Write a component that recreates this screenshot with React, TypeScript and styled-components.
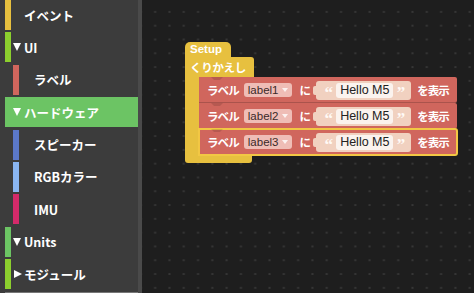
import styled, { createGlobalStyle } from "styled-components";

const GlobalStyle = createGlobalStyle`
  html, body {
    margin: 0;
    padding: 0;
    background: #1e1e1e;
    overflow: hidden;
  }
  body {
    font-family: "Noto Sans CJK JP", "Noto Sans", sans-serif;
  }
`;

const Page = styled.div`
  display: flex;
  width: 474px;
  height: 293px;
  overflow: hidden;
`;

const Sidebar = styled.nav`
  width: 138px;
  flex: none;
  background: #3c3c3c;
  border-right: 4px solid #4a4a4a;
  display: flex;
  flex-direction: column;
  gap: 2.4px;
  overflow: hidden;
`;

const Row = styled.div<{ $selected?: boolean; $bg?: string }>`
  display: flex;
  align-items: center;
  height: 30px;
  flex: none;
  margin-left: 5px;
  background: ${(p) => (p.$selected ? "#6cc464" : p.$bg || "transparent")};
  color: #fff;
  font-size: 12.5px;
  font-weight: 700;
  white-space: nowrap;
`;

const Bar = styled.span<{ $color: string; $level: number }>`
  width: 6px;
  height: 100%;
  flex: none;
  margin-left: ${(p) => (p.$level ? 8 : 0)}px;
  background: ${(p) => p.$color};
`;

const Spacer = styled.span<{ $level: number }>`
  display: flex;
  align-items: center;
  width: ${(p) => (p.$level ? 15 : 13)}px;
  padding-left: 2px;
  box-sizing: border-box;
  flex: none;
`;

const Down = styled.span`
  width: 0;
  height: 0;
  border-left: 4.5px solid transparent;
  border-right: 4.5px solid transparent;
  border-top: 8px solid #fff;
`;

const Right = styled.span`
  width: 0;
  height: 0;
  margin-left: 1px;
  border-top: 4.5px solid transparent;
  border-bottom: 4.5px solid transparent;
  border-left: 8px solid #fff;
`;

const Canvas = styled.main`
  flex: 1;
  position: relative;
  background-color: #1e1e1e;
  background-image: radial-gradient(circle, #363636 0.9px, transparent 1.3px);
  background-size: 14.3px 13.8px;
  background-position: 6px 5px;
`;

const Group = styled.div`
  position: absolute;
  left: 43px;
  top: 42px;
  display: flex;
  flex-direction: column;
  align-items: flex-start;
  color: #fff;
  font-size: 11.5px;
  font-weight: 700;
`;

const Hat = styled.div`
  width: 46px;
  height: 15px;
  line-height: 15px;
  box-sizing: border-box;
  padding-left: 5px;
  background: #e7c03f;
  border-radius: 5px 5px 0 0;
  font-family: "Liberation Sans", "Noto Sans CJK JP", sans-serif;
  font-size: 11.5px;
`;

const LoopHead = styled.div`
  width: 69px;
  height: 20px;
  line-height: 20px;
  box-sizing: border-box;
  padding-left: 5px;
  background: #e7c03f;
  border-radius: 0 3px 0 0;
  letter-spacing: -0.3px;
`;

const LoopBody = styled.div`
  display: flex;
`;

const LoopArm = styled.div`
  width: 14px;
  background: #e7c03f;
`;

const Statements = styled.div`
  display: flex;
  flex-direction: column;
`;

const LoopFoot = styled.div`
  width: 67px;
  height: 8px;
  background: #e7c03f;
  border-radius: 0 0 3px 3px;
`;

const Statement = styled.div<{ $selected?: boolean }>`
  position: relative;
  display: flex;
  align-items: center;
  width: 258px;
  height: 26px;
  box-sizing: border-box;
  padding: 0 8px 0 8px;
  background: #d0665d;
  box-shadow: inset 0 -1px 0 rgba(0, 0, 0, 0.18);
  outline: ${(p) => (p.$selected ? "2px solid #f2c744" : "none")};
  outline-offset: -1px;
  border-radius: 0 2px 2px 0;
  white-space: nowrap;
  &::before {
    content: "";
    position: absolute;
    left: 12px;
    top: 0;
    width: 12px;
    height: 3px;
    background: rgba(0, 0, 0, 0.12);
    clip-path: polygon(0 0, 100% 0, 75% 100%, 25% 100%);
  }
`;

const Word = styled.span<{ $gap?: number }>`
  flex: none;
  margin-right: ${(p) => p.$gap ?? 5}px;
  letter-spacing: -0.9px;
`;

const Dropdown = styled.span`
  flex: none;
  display: flex;
  align-items: center;
  gap: 3px;
  height: 14px;
  padding: 0 4px;
  margin-right: 8px;
  border-radius: 3px;
  background: #efbdb6;
  color: #3a2a28;
  font-family: "Liberation Sans", sans-serif;
  font-weight: 400;
  font-size: 11.5px;
  &::after {
    content: "";
    width: 0;
    height: 0;
    border-left: 3px solid transparent;
    border-right: 3px solid transparent;
    border-top: 4px solid #fff;
    opacity: 0.8;
  }
`;

const StringBlock = styled.span`
  position: relative;
  flex: none;
  display: flex;
  align-items: center;
  width: 95px;
  height: 19px;
  box-sizing: border-box;
  padding-left: 7px;
  margin: 0 6px 0 6px;
  border-radius: 3px;
  background: #f1d1c0;
  &::before {
    content: "";
    position: absolute;
    left: -3px;
    top: 5px;
    width: 4px;
    height: 9px;
    border-radius: 2px 0 0 2px;
    background: #f1d1c0;
  }
`;

const Quote = styled.span`
  flex: none;
  color: #fffaf6;
  font-family: "Liberation Serif", serif;
  font-size: 17px;
  line-height: 1;
  height: 12px;
  font-weight: 700;
  width: 11px;
  text-align: center;
`;

const Field = styled.span`
  flex: none;
  display: flex;
  align-items: center;
  height: 15px;
  padding: 0 4px;
  margin: 0 2px;
  border-radius: 3px;
  background: #fbf3ee;
  color: #222;
  font-family: "Liberation Sans", sans-serif;
  font-weight: 400;
  font-size: 12.5px;
  white-space: nowrap;
`;

const sidebarItems = [
  { label: "イベント", color: "#e7c03f", level: 0 },
  { label: "UI", color: "#8ccf2e", level: 0, arrow: "down" },
  { label: "ラベル", color: "#d0665d", level: 1 },
  { label: "ハードウェア", color: "#6cc464", level: 0, arrow: "down", selected: true },
  { label: "スピーカー", color: "#5b78c8", level: 1 },
  { label: "RGBカラー", color: "#8ab6f2", level: 1 },
  { label: "IMU", color: "#d42a6a", level: 1 },
  { label: "Units", color: "#6cc464", level: 0, arrow: "down" },
  { label: "モジュール", color: "#8ccf2e", level: 0, arrow: "right" },
];

const lines = ["label1", "label2", "label3"];

export default function App() {
  return (
    <Page>
      <GlobalStyle />
      <Sidebar>
        {sidebarItems.map((item) => (
          <Row key={item.label} $selected={item.selected}>
            <Bar $color={item.color} $level={item.level} />
            <Spacer $level={item.level}>
              {item.arrow === "down" && <Down />}
              {item.arrow === "right" && <Right />}
            </Spacer>
            {item.label}
          </Row>
        ))}
        <Row $bg="#777" />
      </Sidebar>
      <Canvas>
        <Group>
          <Hat>Setup</Hat>
          <LoopHead>くりかえし</LoopHead>
          <LoopBody>
            <LoopArm />
            <Statements>
              {lines.map((name, i) => (
                <Statement key={name} $selected={i === 2}>
                  <Word>ラベル</Word>
                  <Dropdown>{name}</Dropdown>
                  <Word $gap={0}>に</Word>
                  <StringBlock>
                    <Quote>“</Quote>
                    <Field>Hello M5</Field>
                    <Quote>”</Quote>
                  </StringBlock>
                  <Word $gap={0}>を表示</Word>
                </Statement>
              ))}
            </Statements>
          </LoopBody>
          <LoopFoot />
        </Group>
      </Canvas>
    </Page>
  );
}
